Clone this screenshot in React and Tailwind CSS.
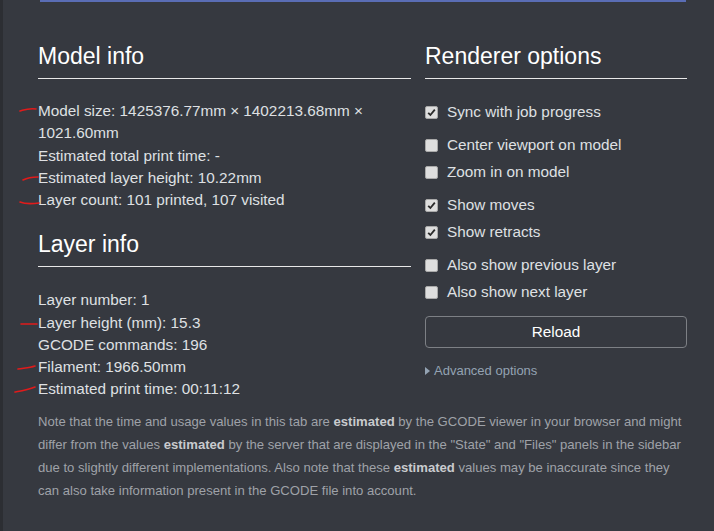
const modelLines = [
  { text: 'Model size: 1425376.77mm × 1402213.68mm × 1021.60mm', mark: 'a' },
  { text: 'Estimated total print time: -' },
  { text: 'Estimated layer height: 10.22mm', mark: 'b' },
  { text: 'Layer count: 101 printed, 107 visited', mark: 'c' },
]

const layerLines = [
  { text: 'Layer number: 1' },
  { text: 'Layer height (mm): 15.3', mark: 'd' },
  { text: 'GCODE commands: 196' },
  { text: 'Filament: 1966.50mm', mark: 'e' },
  { text: 'Estimated print time: 00:11:12', mark: 'f' },
]

const groups = [
  [
    { label: 'Sync with job progress', checked: true },
  ],
  [
    { label: 'Center viewport on model' },
    { label: 'Zoom in on model' },
  ],
  [
    { label: 'Show moves', checked: true },
    { label: 'Show retracts', checked: true },
  ],
  [
    { label: 'Also show previous layer' },
    { label: 'Also show next layer' },
  ],
]

// red pen strokes scribbled next to some lines
const marks = {
  a: { cls: 'left-[-19px] top-[7px]', d: 'M1 4 C 5 3, 9 1, 17 2' },
  b: { cls: 'left-[-16px] top-[8px]', d: 'M1 5 C 5 3, 9 2, 16 2' },
  c: { cls: 'left-[-19px] top-[10px]', d: 'M1 3 C 6 5, 12 5, 20 4' },
  d: { cls: 'left-[-18px] top-[9px]', d: 'M1 3 L 17 3' },
  e: { cls: 'left-[-21px] top-[8px]', d: 'M1 5 C 6 4, 12 4, 18 2' },
  f: { cls: 'left-[-24px] top-[8px]', d: 'M1 6 C 7 5, 14 4, 21 1' },
}

function Mark({ id }) {
  const m = marks[id]
  return (
    <svg className={`absolute ${m.cls}`} width="24" height="8" viewBox="0 0 24 8">
      <path d={m.d} stroke="#e01b1b" strokeWidth="1.6" fill="none" strokeLinecap="round" />
    </svg>
  )
}

function InfoLine({ text, mark }) {
  return (
    <p className="relative">
      {mark && <Mark id={mark} />}
      {text}
    </p>
  )
}

function Heading({ children, className = '' }) {
  return (
    <h2 className={`text-[23px] leading-[26px] text-white border-b border-[#e8e8e8] ${className}`}>
      {children}
    </h2>
  )
}

function Checkbox({ checked }) {
  return (
    <span className="w-[13px] h-[13px] shrink-0 rounded-[2px] border border-[#a9a9a9] bg-[#dedede] flex items-center justify-center">
      {checked && (
        <svg width="9" height="9" viewBox="0 0 9 9">
          <path d="M1.2 4.8 L3.4 7 L7.8 1.6" stroke="#2a2a2a" strokeWidth="1.8" fill="none" />
        </svg>
      )}
    </span>
  )
}

const B = ({ children }) => <b className="text-[#c9cbce]">{children}</b>

export default function App() {
  return (
    <div
      className="min-h-[531px] bg-[#363940] border-l-[3px] border-[#2c2e33] text-[#dfe0e3] overflow-hidden"
      style={{ fontFamily: '"Liberation Sans", Arial, sans-serif' }}
    >
      <div className="ml-[37px] mr-[28px] h-[2px] bg-[#5a6db5]" />

      <div className="pl-[35px] pr-[27px]">
        <div className="flex gap-[14px] mt-[41px]">
          {/* left column */}
          <div className="w-[373px]">
            <Heading className="pb-[9px]">Model info</Heading>
            <div className="mt-[21px] text-[15.3px] leading-[22.25px]">
              {modelLines.map((l) => (
                <InfoLine key={l.text} {...l} />
              ))}
            </div>

            <Heading className="mt-[20px] pb-[9px]">Layer info</Heading>
            <div className="mt-[22px] text-[15.3px] leading-[22.25px]">
              {layerLines.map((l) => (
                <InfoLine key={l.text} {...l} />
              ))}
            </div>
          </div>

          {/* right column */}
          <div className="w-[262px]">
            <Heading className="pb-[9px]">Renderer options</Heading>
            <div className="mt-[20px] text-[15.3px]">
              {groups.map((g, i) => (
                <div key={i} className={i > 0 ? 'mt-[6px]' : ''}>
                  {g.map((c) => (
                    <label key={c.label} className="flex items-center gap-[9px] h-[27px]">
                      <Checkbox checked={c.checked} />
                      <span>{c.label}</span>
                    </label>
                  ))}
                </div>
              ))}
            </div>
            <button className="mt-[10px] w-full h-[32px] rounded-[4px] border border-[#7d8085] text-white text-[15.3px]">
              Reload
            </button>
            <div className="mt-[14px] flex items-center gap-[4px] text-[13px] leading-[18px] text-[#94a3b3]">
              <svg width="5" height="8" viewBox="0 0 5 8">
                <path d="M0 0 L5 4 L0 8 Z" fill="#94a3b3" />
              </svg>
              <span>Advanced options</span>
            </div>
          </div>
        </div>

        <p className="mt-[9px] text-[13.1px] leading-[23px] text-[#9fa2a8] whitespace-nowrap">
          Note that the time and usage values in this tab are <B>estimated</B> by the GCODE viewer in your browser and might
          <br />
          differ from the values <B>estimated</B> by the server that are displayed in the "State" and "Files" panels in the sidebar
          <br />
          due to slightly different implementations. Also note that these <B>estimated</B> values may be inaccurate since they
          <br />
          can also take information present in the GCODE file into account.
        </p>
      </div>
    </div>
  )
}
